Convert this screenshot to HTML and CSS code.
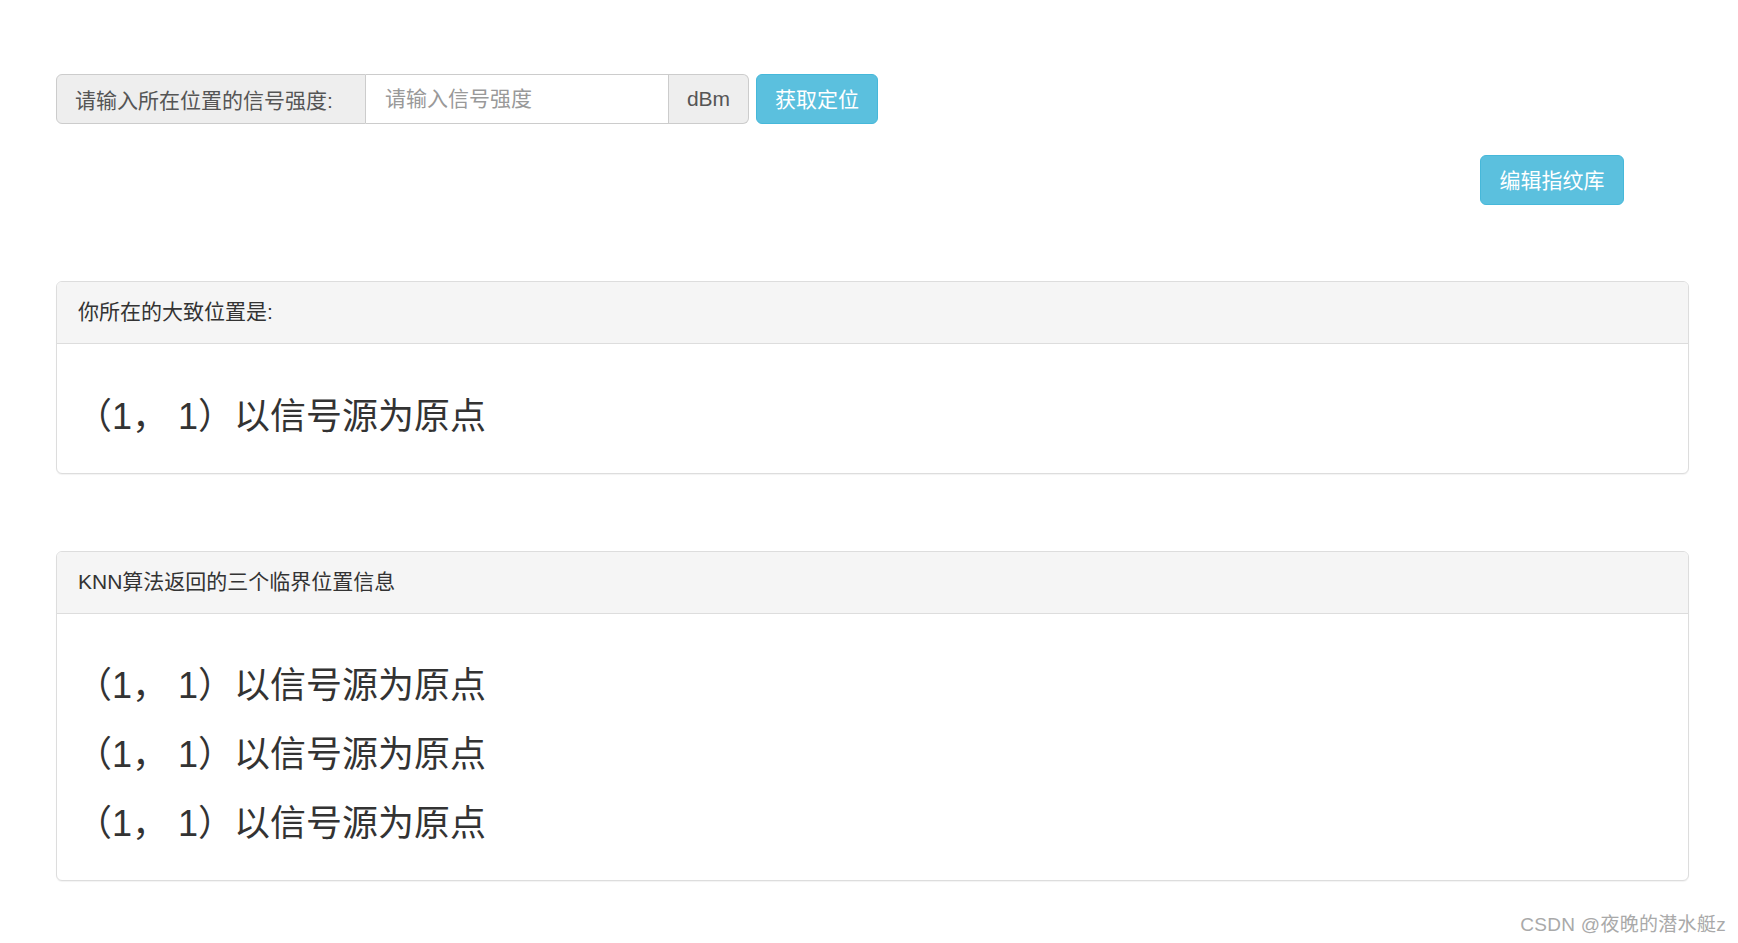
FILE: index.html
```html
<!DOCTYPE html>
<html lang="zh-CN">
<head>
<meta charset="utf-8">
<title>定位</title>
<link rel="stylesheet" href="styles.css">
</head>
<body>
<div class="page">
  <div class="search-row">
    <div class="input-group">
      <span class="addon addon-label">请输入所在位置的信号强度:</span>
      <input class="field" type="text" placeholder="请输入信号强度">
      <span class="addon addon-unit">dBm</span>
    </div>
    <button class="btn btn-info btn-locate">获取定位</button>
  </div>
  <div class="edit-row">
    <button class="btn btn-info btn-edit">编辑指纹库</button>
  </div>
  <div class="panel panel-first">
    <div class="panel-heading">你所在的大致位置是:</div>
    <div class="panel-body">
      <h3 class="coord">（1，&nbsp;1）以信号源为原点</h3>
    </div>
  </div>
  <div class="panel panel-second">
    <div class="panel-heading">KNN算法返回的三个临界位置信息</div>
    <div class="panel-body">
      <h3 class="coord">（1，&nbsp;1）以信号源为原点</h3>
      <h3 class="coord">（1，&nbsp;1）以信号源为原点</h3>
      <h3 class="coord">（1，&nbsp;1）以信号源为原点</h3>
    </div>
  </div>
</div>
<div class="watermark">CSDN @夜晚的潜水艇z</div>
</body>
</html>
```

FILE: styles.css
```css
* { box-sizing: border-box; }

html, body {
  margin: 0;
  padding: 0;
  background: #fff;
}

body {
  font-family: "Liberation Sans", Arial, "Noto Sans CJK SC", sans-serif;
  font-size: 21px;
  color: #333;
  position: relative;
  min-height: 943px;
}

.page {
  padding: 74px 49px 0 56px;
}

.search-row {
  display: flex;
  align-items: stretch;
  gap: 7px;
  height: 50px;
}

.input-group {
  display: flex;
  height: 50px;
}

.addon {
  display: flex;
  align-items: center;
  justify-content: center;
  background: #eee;
  border: 1px solid #ccc;
  color: #555;
  font-size: 21px;
  white-space: nowrap;
  padding-bottom: 1px;
}

.addon-label {
  width: 310px;
  justify-content: flex-start;
  padding-left: 18px;
  border-radius: 6px 0 0 6px;
}

.addon-unit {
  width: 80px;
  border-left: 0;
  border-radius: 0 6px 6px 0;
}

.field {
  width: 303px;
  height: 50px;
  border: 1px solid #ccc;
  border-left: 0;
  padding: 0 19px;
  font-family: inherit;
  font-size: 21px;
  color: #555;
  background: #fff;
  outline: none;
}

.field::placeholder {
  color: #999;
}

.btn {
  font-family: inherit;
  font-size: 21px;
  color: #fff;
  background: #5bc0de;
  border: 1px solid #46b8da;
  border-radius: 6px;
  height: 50px;
  padding: 0 18px 2px;
  cursor: pointer;
}

.btn-locate {
  width: 122px;
}

.edit-row {
  display: flex;
  justify-content: flex-end;
  margin-top: 31px;
  padding-right: 65px;
}

.btn-edit {
  width: 144px;
}

.panel {
  border: 1px solid #ddd;
  border-radius: 6px;
  background: #fff;
  box-shadow: 0 1px 1px rgba(0, 0, 0, 0.05);
}

.panel-first {
  margin-top: 76px;
}

.panel-second {
  margin-top: 77px;
}

.panel-heading {
  background: #f5f5f5;
  border-bottom: 1px solid #ddd;
  border-radius: 5px 5px 0 0;
  height: 62px;
  padding: 0 21px 5px;
  display: flex;
  align-items: center;
  font-size: 21px;
  color: #333;
}

.panel-body {
  padding: 22px 22px 24px 19px;
}

.coord {
  font-size: 36px;
  font-weight: 400;
  line-height: 39px;
  color: #333;
  margin: 31px 0 13px;
}

.coord + .coord {
  margin-top: 30px;
}

.panel-second .coord:first-child {
  margin-top: 30px;
  margin-bottom: 14px;
}

.watermark {
  position: absolute;
  right: 12px;
  bottom: 7px;
  font-size: 19px;
  color: #a9a9a9;
  text-shadow: 0 0 1px #fff;
  letter-spacing: 0.3px;
}
```
